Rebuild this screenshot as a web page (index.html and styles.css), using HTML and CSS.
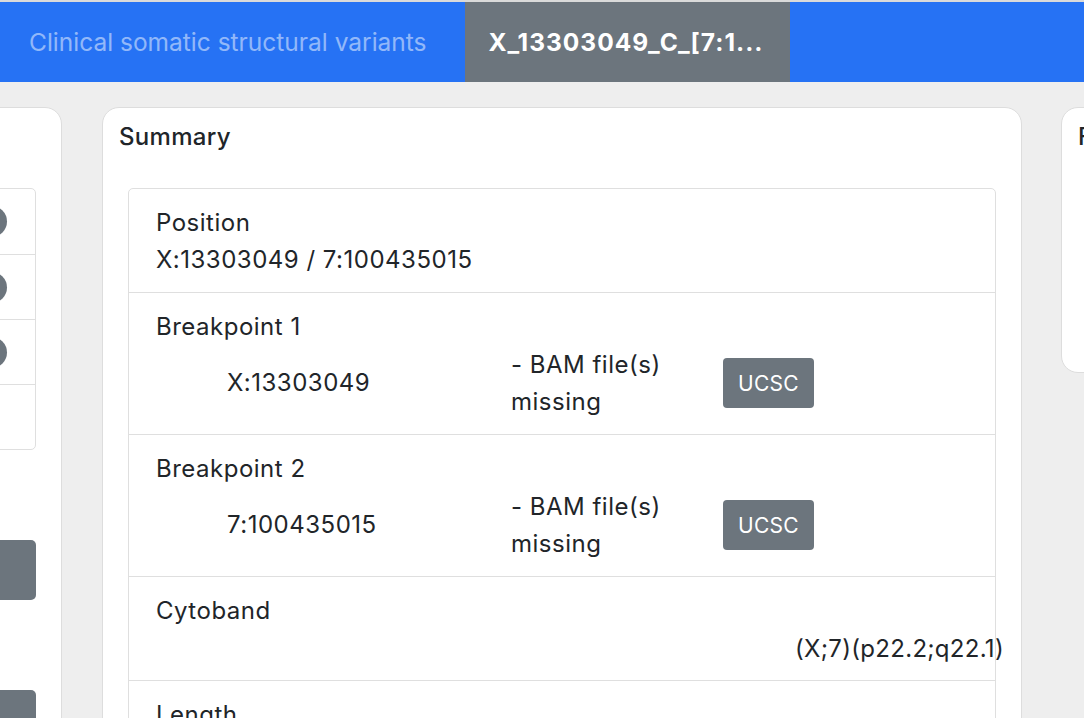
FILE: index.html
```html
<!DOCTYPE html>
<html lang="en">
<head>
<meta charset="utf-8">
<title>Structural variant</title>
<link rel="stylesheet" href="styles.css">
</head>
<body>
<div class="topline"></div>
<nav class="tabs">
  <div class="tab tab-link">Clinical somatic structural variants</div>
  <div class="tab tab-active">X_13303049_C_[7:1...</div>
</nav>
<main class="columns">
  <section class="card card-left">
    <div class="card-body">
      <ul class="list left-list">
        <li class="left-item"><span class="pill"></span></li>
        <li class="left-item"><span class="pill"></span></li>
        <li class="left-item"><span class="pill"></span></li>
        <li class="left-item"></li>
      </ul>
      <div class="left-btn left-btn-1"></div>
      <div class="left-btn left-btn-2"></div>
    </div>
  </section>
  <section class="card card-summary">
    <h2 class="card-title">Summary</h2>
    <div class="card-body">
      <ul class="list">
        <li class="item">
          <div class="label">Position</div>
          <div class="value">X:13303049 / 7:100435015</div>
        </li>
        <li class="item item-bp">
          <div class="label">Breakpoint 1</div>
          <div class="bp-row">
            <div class="bp-pos">X:13303049</div>
            <div class="bp-note">- BAM file(s) missing</div>
            <button class="btn">UCSC</button>
          </div>
        </li>
        <li class="item item-bp">
          <div class="label">Breakpoint 2</div>
          <div class="bp-row">
            <div class="bp-pos">7:100435015</div>
            <div class="bp-note">- BAM file(s) missing</div>
            <button class="btn">UCSC</button>
          </div>
        </li>
        <li class="item">
          <div class="label">Cytoband</div>
          <div class="cyto-row"><span class="cyto">(X;7)(p22.2;q22.1)</span></div>
        </li>
        <li class="item">
          <div class="label">Length</div>
          <div class="value">&nbsp;</div>
        </li>
      </ul>
    </div>
  </section>
  <section class="card card-right">
    <h2 class="card-title">F</h2>
  </section>
</main>
</body>
</html>
```
FILE: styles.css
```css
html, body {
  margin: 0;
  padding: 0;
  height: 718px;
  overflow: hidden;
  background: #eeeeee;
  font-family: Inter, "Noto Sans", "Liberation Sans", sans-serif;
  font-size: 24px;
  line-height: 36px;
  letter-spacing: 0.5px;
  color: #212529;
}
.topline {
  height: 2px;
  background: #dadada;
}
.tabs {
  display: flex;
  height: 80px;
  background: #2672f4;
}
.tab {
  display: flex;
  align-items: center;
  white-space: nowrap;
  font-size: 24.5px;
  letter-spacing: 0;
}
.tab-link {
  padding: 0 38px 0 29px;
  color: rgba(255, 255, 255, 0.5);
}
.tab-active {
  width: 325px;
  box-sizing: border-box;
  padding: 0 24px;
  background: #6c757d;
  color: #ffffff;
  font-weight: 700;
  letter-spacing: 1px;
}
.columns {
  display: flex;
  gap: 40px;
  margin-top: 25px;
  align-items: flex-start;
}
.card {
  flex: none;
  background: #ffffff;
  border: 1px solid #dddddd;
  border-radius: 17px;
  box-sizing: border-box;
}
.card-left {
  width: 300px;
  margin-left: -238px;
  height: 700px;
}
.card-summary {
  width: 920px;
  height: 700px;
}
.card-right {
  width: 300px;
  height: 266px;
  margin-left: -1px;
}
.card-title {
  margin: 0;
  padding: 11px 16px 13px;
  font-size: 24px;
  line-height: 36px;
  font-weight: 500;
  letter-spacing: 0.3px;
}
.card-body {
  padding: 20px 25px 0;
}
.card-left .card-body {
  padding-top: 80px;
}
.list {
  list-style: none;
  margin: 0;
  padding: 0;
  border: 1px solid #dfdfdf;
  border-radius: 5px;
}
.item {
  padding: 16px 27px 13px;
  border-top: 1px solid #dfdfdf;
}
.item:first-child {
  border-top: none;
}
.item-bp {
  padding-bottom: 14px;
}
.value {
  line-height: 38px;
}
.bp-row {
  display: flex;
  align-items: center;
  margin-top: 1px;
}
.bp-pos {
  width: 284px;
  margin-left: 71px;
  flex: none;
}
.bp-note {
  width: 195px;
  margin-right: 17px;
  flex: none;
  line-height: 37px;
}
.btn {
  flex: none;
  width: 91px;
  height: 50px;
  padding: 0;
  border: none;
  border-radius: 4px;
  background: #6c757d;
  color: #ffffff;
  font-family: inherit;
  font-size: 21px;
  letter-spacing: 0.3px;
}
.cyto-row {
  display: flex;
  justify-content: flex-end;
  margin-top: 2px;
}
.cyto {
  margin-right: -36px;
  white-space: nowrap;
  letter-spacing: 0.3px;
}
.left-item {
  height: 65px;
  border-top: 1px solid #dfdfdf;
  display: flex;
  align-items: center;
  justify-content: flex-end;
  padding-right: 28px;
  box-sizing: border-box;
}
.left-item:first-child {
  border-top: none;
}
.pill {
  width: 50px;
  height: 31px;
  border-radius: 16px;
  background: #6c757d;
}
.left-btn {
  height: 60px;
  border-radius: 5px;
  background: #6c757d;
}
.left-btn-1 {
  margin-top: 90px;
}
.left-btn-2 {
  margin-top: 90px;
}
```
